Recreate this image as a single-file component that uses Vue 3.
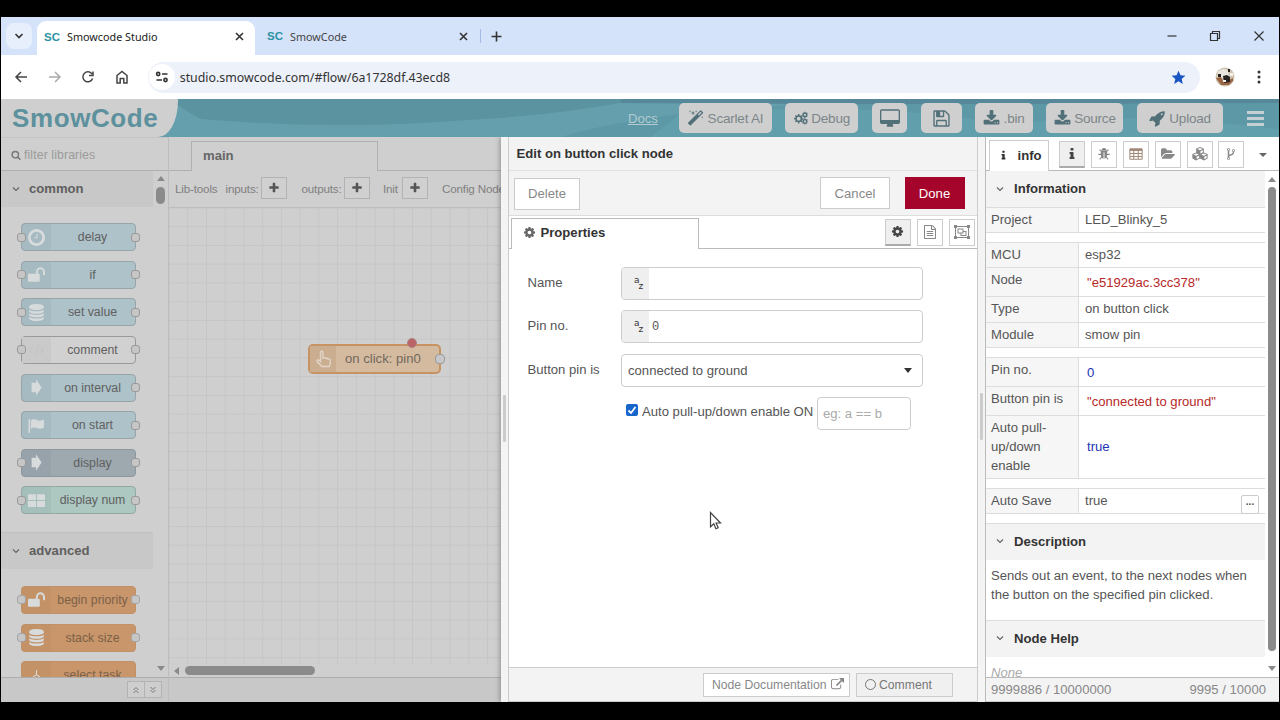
<script setup>
import { h, ref } from 'vue'

// 1792 grid glyphs, a few small ones are drawn on a 16 grid
const glyphs = {
    search: ['0 0 1792 1792', 'M1216 832q0-185-131.5-316.5t-316.5-131.5-316.5 131.5-131.5 316.5 131.5 316.5 316.5 131.5 316.5-131.5 131.5-316.5zm512 832q0 52-38 90t-90 38q-54 0-90-38l-343-342q-179 124-399 124-143 0-273.5-55.5t-225-150-150-225-55.5-273.5 55.5-273.5 150-225 225-150 273.5-55.5 273.5 55.5 225 150 150 225 55.5 273.5q0 220-124 399l343 343q37 37 37 90z'],
    plus: ['0 0 1792 1792', 'M1600 736v192q0 40-28 68t-68 28h-416v416q0 40-28 68t-68 28h-192q-40 0-68-28t-28-68v-416h-416q-40 0-68-28t-28-68v-192q0-40 28-68t68-28h416v-416q0-40 28-68t68-28h192q40 0 68 28t28 68v416h416q40 0 68 28t28 68z'],
    cog: ['0 0 1792 1792', 'M1152 896q0-106-75-181t-181-75-181 75-75 181 75 181 181 75 181-75 75-181zm512-109v222q0 12-8 23t-20 13l-185 28q-19 54-39 91 35 50 107 138 10 12 10 25t-9 23q-27 37-99 108t-94 71q-12 0-26-9l-138-108q-44 23-91 38-16 136-29 186-7 28-36 28h-222q-14 0-24.5-8.5t-11.5-21.5l-28-184q-49-16-90-37l-141 107q-10 9-25 9-14 0-25-11-126-114-165-168-7-10-7-23 0-12 8-23 15-21 51-66.5t54-70.5q-27-50-41-99l-183-27q-13-2-21-12.5t-8-23.5v-222q0-12 8-23t19-13l186-28q14-46 39-92-40-57-107-138-10-12-10-24 0-10 9-23 26-36 98.5-107.5t94.5-71.5q13 0 26 10l138 107q44-23 91-38 16-136 29-186 7-28 36-28h222q14 0 24.5 8.5t11.5 21.5l28 184q49 16 90 37l142-107q9-9 24-9 13 0 25 10 129 119 165 170 7 8 7 22 0 12-8 23-15 21-51 66.5t-54 70.5q26 50 41 98l183 28q13 2 21 12.5t8 23.5z'],
    download: ['0 0 1792 1792', 'M1344 1344q0-26-19-45t-45-19-45 19-19 45 19 45 45 19 45-19 19-45zm256 0q0-26-19-45t-45-19-45 19-19 45 19 45 45 19 45-19 19-45zm128-224v320q0 40-28 68t-68 28h-1472q-40 0-68-28t-28-68v-320q0-40 28-68t68-28h465l135 136q58 56 136 56t136-56l136-136h464q40 0 68 28t28 68zm-325-569q17 41-14 70l-448 448q-18 19-45 19t-45-19l-448-448q-31-29-14-70 17-39 59-39h256v-448q0-26 19-45t45-19h256q26 0 45 19t19 45v448h256q42 0 59 39z'],
    save: ['0 0 1792 1792', 'M512 1536h768v-384h-768v384zm896 0h128v-896q0-14-10-38.5t-20-34.5l-281-281q-10-10-34-20t-39-10v416q0 40-28 68t-68 28h-576q-40 0-68-28t-28-68v-416h-128v1280h128v-416q0-40 28-68t68-28h832q40 0 68 28t28 68v416zm-384-928v-320q0-13-9.5-22.5t-22.5-9.5h-192q-13 0-22.5 9.5t-9.5 22.5v320q0 13 9.5 22.5t22.5 9.5h192q13 0 22.5-9.5t9.5-22.5zm640 32v928q0 40-28 68t-68 28h-1344q-40 0-68-28t-28-68v-1344q0-40 28-68t68-28h928q40 0 88 20t76 48l280 280q28 28 48 76t20 88z'],
    desktop: ['-64 0 1920 1664', 'M1728 992v-832q0-13-9.5-22.5t-22.5-9.5h-1600q-13 0-22.5 9.5t-9.5 22.5v832q0 13 9.5 22.5t22.5 9.5h1600q13 0 22.5-9.5t9.5-22.5zm128-832v1088q0 66-47 113t-113 47h-544q0 37 16 77.5t32 71 16 43.5q0 26-19 45t-45 19h-512q-26 0-45-19t-19-45q0-14 16-44t32-70 16-78h-544q-66 0-113-47t-47-113v-1088q0-66 47-113t113-47h1600q66 0 113 47t47 113z'],
    external: ['0 0 1792 1792', 'M1408 928v320q0 119-84.5 203.5t-203.5 84.5h-832q-119 0-203.5-84.5t-84.5-203.5v-832q0-119 84.5-203.5t203.5-84.5h704q14 0 23 9t9 23v64q0 14-9 23t-23 9h-704q-66 0-113 47t-47 113v832q0 66 47 113t113 47h832q66 0 113-47t47-113v-320q0-14 9-23t23-9h64q14 0 23 9t9 23zm384-864v512q0 26-19 45t-45 19-45-19l-176-176-652 652q-10 10-23 10t-23-10l-114-114q-10-10-10-23t10-23l652-652-176-176q-19-19-19-45t19-45 45-19h512q26 0 45 19t19 45z'],
    folder: ['-70 0 1900 1792', 'M1815 952q0 31-31 66l-336 396q-43 51-120.5 86.5t-143.5 35.5h-1088q-34 0-60.5-13t-26.5-43q0-31 31-66l336-396q43-51 120.5-86.5t143.5-35.5h1088q34 0 60.5 13t26.5 43zm-343-344v160h-832q-94 0-197 47.5t-164 119.5l-337 396-5 6q0-4-.5-12.5t-.5-12.5v-960q0-92 66-158t158-66h320q92 0 158 66t66 158v32h544q92 0 158 66t66 158z'],
    fork: ['0 0 1792 1792', 'M672 1472q0-40-28-68t-68-28-68 28-28 68 28 68 68 28 68-28 28-68zm0-1152q0-40-28-68t-68-28-68 28-28 68 28 68 68 28 68-28 28-68zm640 128q0-40-28-68t-68-28-68 28-28 68 28 68 68 28 68-28 28-68zm96 0q0 52-26 96.5t-70 69.5q-2 287-226 414-67 38-203 81-128 40-169.5 71t-41.5 100v26q44 25 70 69.5t26 96.5q0 80-56 136t-136 56-136-56-56-136q0-52 26-96.5t70-69.5v-820q-44-25-70-69.5t-26-96.5q0-80 56-136t136-56 136 56 56 136q0 52-26 96.5t-70 69.5v497q54-26 154-57 55-17 87.5-29.5t70.5-31 59-39.5 40.5-51 28-69.5 8.5-91.5q-44-25-70-69.5t-26-96.5q0-80 56-136t136-56 136 56 56 136z'],
    rocket: ['0 0 1792 1792', 'M1440 448q0-40-28-68t-68-28-68 28-28 68 28 68 68 28 68-28 28-68zm224-288q0 249-75.5 430.5t-253.5 360.5q-81 80-195 176l-20 379q-2 16-16 26l-384 224q-7 4-16 4-12 0-23-9l-64-64q-13-14-8-32l85-276-281-281-276 85q-3 1-9 1-14 0-23-9l-64-64q-17-19-5-39l224-384q10-14 26-16l379-20q96-114 176-195 188-187 358-258t431-71q14 0 24 9.5t10 22.5z'],
    magic: ['0 0 1792 1792', 'M1254 581l293-293-107-107-293 293zm447-293q0 27-18 45l-1286 1286q-18 18-45 18t-45-18l-198-198q-18-18-18-45t18-45l1286-1286q18-18 45-18t45 18l198 198q18 18 18 45zm-1351-190l98 30-98 30-30 98-30-98-98-30 98-30 30-98zm350 162l196 60-196 60-60 196-60-196-196-60 196-60 60-196zm930 478l98 30-98 30-30 98-30-98-98-30 98-30 30-98zm-640-640l98 30-98 30-30 98-30-98-98-30 98-30 30-98z'],
    database: ['0 0 1792 1792', 'M896 768q237 0 443-43t325-127v170q0 69-103 128t-280 93.5-385 34.5-385-34.5-280-93.5-103-128v-170q119 84 325 127t443 43zm0 768q237 0 443-43t325-127v170q0 69-103 128t-280 93.5-385 34.5-385-34.5-280-93.5-103-128v-170q119 84 325 127t443 43zm0-384q237 0 443-43t325-127v170q0 69-103 128t-280 93.5-385 34.5-385-34.5-280-93.5-103-128v-170q119 84 325 127t443 43zm0-1152q208 0 385 34.5t280 93.5 103 128v128q0 69-103 128t-280 93.5-385 34.5-385-34.5-280-93.5-103-128v-128q0-69 103-128t280-93.5 385-34.5z'],
    info: ['0 0 1792 1792', 'M1216 1344v128q0 26-19 45t-45 19h-512q-26 0-45-19t-19-45v-128q0-26 19-45t45-19h64v-384h-64q-26 0-45-19t-19-45v-128q0-26 19-45t45-19h384q26 0 45 19t19 45v576h64q26 0 45 19t19 45zm-128-1152v192q0 26-19 45t-45 19h-256q-26 0-45-19t-19-45v-192q0-26 19-45t45-19h256q26 0 45 19t19 45z'],
    file: ['0 0 1792 1792', 'M1596 380q28 28 48 76t20 88v1152q0 40-28 68t-68 28h-1344q-40 0-68-28t-28-68v-1600q0-40 28-68t68-28h896q40 0 88 20t76 48zm-444-244v376h376q-10-29-22-41l-313-313q-12-12-41-22zm384 1528v-1024h-416q-40 0-68-28t-28-68v-416h-768v1536h1280zM480 768h832v128h-832zM480 1024h832v128h-832zM480 1280h832v128h-832z'],
    unlock: ['64 128 1664 1408', 'M1728 576v256q0 26-19 45t-45 19h-64q-26 0-45-19t-19-45v-256q0-106-75-181t-181-75-181 75-75 181v192h96q40 0 68 28t28 68v576q0 40-28 68t-68 28h-960q-40 0-68-28t-28-68v-576q0-40 28-68t68-28h672v-192q0-185 131.5-316.5t316.5-131.5 316.5 131.5 131.5 316.5z'],
    clock: ['0 0 16 16', 'M8 0a8 8 0 1 0 .01 0zM8 2.6a5.4 5.4 0 1 1-.01 0zM8 4.4h1v4.4H5.8v-1H8z'],
    arrow: ['0 0 16 16', 'M3.4 3.6H7.600V.2L12.800 8 7.600 15.800v-3.400H3.400z'],
    flag: ['0 0 16 16', 'M.5 2h1.4v13H.5zM2.6 3.2c3-1.6 4.6-.9 6.2-.2 2 .8 3.700.4 6.2-.7v7.500c-2.400 1.300-4.200 1.600-6.200.8-1.800-.7-3.300-1.100-6.200.5z'],
    windows: ['0 0 16 16', 'M0 2h7.500v5.600H0zM8.500 2H16v5.600H8.500zM0 8.500h7.500V14H0zM8.500 8.500H16V14H8.500z'],
    quote: ['0 0 16 16', 'M4 5l-3 4 3 3 .7-.7L2.500 9l2.200-3.300zM9.500 3.500l1 .4-3 9-1-.4zM12 5l3 3.500-3 3.500-.7-.7L13.500 8.500l-2.200-2.800z'],
    usb: ['0 0 16 16', 'M7.500 3h1v4l3 2-.5.8-3-2-3 2-.5-.8 3-2z'],
    table: ['0 0 16 16', 'M1.400 1.500h13.200q1 0 1 1v11q0 1-1 1H1.400q-1 0-1-1v-11q0-1 1-1zM1.600 4.600v2.200h3.200V4.600zM6 4.600v2.200h4V4.600zM11.200 4.600v2.200h3.200V4.600zM1.600 8v2.200h3.200V8zM6 8v2.200h4V8zM11.200 8v2.200h3.200V8zM1.600 11.300v2h3.200v-2zM6 11.300v2h4v-2zM11.200 11.300v2h3.200v-2z'],
    bug: ['0 0 16 16', 'M5 4.200a3 3 0 0 1 6 0zM3.200 2.600l2 2h5.600l2-2 .8.800-2 2v2.400h2.900v1.200h-2.900c0 1-.2 1.800-.6 2.500l2.200 2.200-.8.800-2.100-2.100c-.7.700-1.500 1-1.800 1V6H7.500v7.400c-.7 0-1.400-.4-2-1l-2 2.100-.9-.8 2.200-2.300C4.500 10.600 4.400 9.900 4.400 9H1.500V7.800h2.900V5.400l-2-2z'],
    cubes: ['0 0 18 16', 'M9 0l4.300 1.700v4.600l4.300 1.800v5L13.400 15.300 9 13.200l-4.400 2.100L.4 13.100v-5l4.300-1.800V1.700zM9 1.300L6 2.500l3 1.200 3-1.200zM9.500 7.300l2.700-1.200V3.800L9.500 5zM4.700 7.500l-3 1.200 3 1.200 3-1.200zM5.200 13.700L8 12.400V9.900l-2.800 1.200zM13.300 7.500l-3 1.200 3 1.200 3-1.200zM13.800 13.700l2.700-1.300V9.900l-2.700 1.200z'],
    group: ['0 0 16 16', 'M0 1h3v1h10V1h3v3h-1v8h1v3h-3v-1H3v1H0v-3h1V4H0zM2 4v8h1v1h10v-1h1V4h-1V3H3v1zM3.500 4.500h6V7h3v5h-6V9.500h-3zM4.500 5.500v3h4v-3zM9.500 8v1.500h-2V11h4V8z'],
    cogs: ['0 0 18 16', 'M5.200 3h1.600l.3 1.500 1.200.5 1.300-.8 1.100 1.100-.8 1.300.5 1.200 1.500.3v1.600l-1.500.3-.5 1.200.8 1.300-1.100 1.100-1.300-.8-1.200.5L6.800 15H5.200l-.3-1.700-1.200-.5-1.300.8-1.100-1.100.8-1.300-.5-1.200L.1 9.700V8.100l1.500-.3.500-1.200-.8-1.300 1.100-1.100 1.300.8 1.200-.5zM6 6.500a2.400 2.400 0 1 0 .01 0zM13.400 0h1.400l.2 1 .9.400.8-.5.900.9-.5.900.3.800v1.400l-.5.400.3.900-.9.900-.8-.5-.7.400-.2 1h-1.300l-.2-1-.8-.4-.8.500-.9-.9.500-.8-.4-.9V3.100l.5-.5-.4-.8.900-.9.800.5.700-.4zM14.100 2.500a1.400 1.400 0 1 0 .01 0zM13.400 8.400h1.400l.2 1 .9.400.8-.5.900.9-.5.900.3.800v1.400l-.5.400.3.900-.9.900-.8-.5-.7.400-.2 1h-1.300l-.2-1-.8-.4-.8.500-.9-.9.500-.8-.4-.9v-1.400l.5-.5-.4-.8.900-.9.800.5.700-.4zM14.100 10.900a1.400 1.400 0 1 0 .01 0z']
}

const Icon = (props) => {
    const [box, d] = glyphs[props.name]
    return h('svg', { viewBox: box, width: props.size, height: props.size, fill: 'currentColor', 'fill-rule': 'evenodd' }, [h('path', { d })])
}
Icon.props = ['name', 'size']

const tabs = [
    { title: 'Smowcode Studio', active: true },
    { title: 'SmowCode', active: false }
]

const actions = [
    { id: 'ai', icon: 'magic', size: 17, label: 'Scarlet AI' },
    { id: 'debug', icon: 'cogs', size: 14, label: 'Debug' },
    { id: 'desk', icon: 'desktop', size: 20, label: '' },
    { id: 'save', icon: 'save', size: 19, label: '' },
    { id: 'bin', icon: 'download', size: 17, label: '.bin' },
    { id: 'source', icon: 'download', size: 17, label: 'Source' },
    { id: 'upload', icon: 'rocket', size: 17, label: 'Upload' }
]

const common = [
    { label: 'delay', icon: 'clock', tone: 'blue', input: true },
    { label: 'if', icon: 'unlock', tone: 'blue', input: true },
    { label: 'set value', icon: 'database', tone: 'blue', input: true },
    { label: 'comment', icon: 'quote', tone: 'plain', input: true },
    { label: 'on interval', icon: 'arrow', tone: 'blue', input: false },
    { label: 'on start', icon: 'flag', tone: 'blue', input: false },
    { label: 'display', icon: 'arrow', tone: 'slate', input: true },
    { label: 'display num', icon: 'windows', tone: 'green', input: true }
]

const advanced = [
    { label: 'begin priority', icon: 'unlock', tone: 'orange', input: true },
    { label: 'stack size', icon: 'database', tone: 'orange', input: true },
    { label: 'select task', icon: 'usb', tone: 'orange', input: false }
]

const categories = [
    { name: 'common', nodes: common },
    { name: 'advanced', nodes: advanced }
]

const sideTabs = ['info', 'bug', 'table', 'folder', 'cubes', 'fork']

const groups = [
    [{ key: 'Project', value: 'LED_Blinky_5', type: '' }],
    [
        { key: 'MCU', value: 'esp32', type: '' },
        { key: 'Node', value: '"e51929ac.3cc378"', type: 'str' },
        { key: 'Type', value: 'on button click', type: '' },
        { key: 'Module', value: 'smow pin', type: '' }
    ],
    [
        { key: 'Pin no.', value: '0', type: 'num' },
        { key: 'Button pin is', value: '"connected to ground"', type: 'str' },
        { key: 'Auto pull-up/down enable', value: 'true', type: 'num tall' }
    ],
    [{ key: 'Auto Save', value: 'true', type: '', more: true }]
]

const name = ref('')
const pin = ref('0')
const pull = ref(true)
const condition = ref('')
</script>

<template>
    <div class="screen">
        <div class="tabstrip">
            <div class="tab-search">
                <svg width="10" height="10" viewBox="0 0 10 10"><path d="M1.500 3l3.500 3.500L8.500 3" /></svg>
            </div>
            <div v-for="tab in tabs" :key="tab.title" class="btab" :class="{ active: tab.active }">
                <b class="fav">SC</b>
                <span class="btitle">{{ tab.title }}</span>
                <svg class="x" width="9" height="9" viewBox="0 0 9 9"><path d="M1 1l7 7M8 1L1 8" /></svg>
            </div>
            <i class="tabsep"></i>
            <svg class="newtab" width="11" height="11" viewBox="0 0 11 11"><path d="M5.500 .5v10M.5 5.500h10" /></svg>
            <div class="win">
                <svg width="12" height="12" viewBox="0 0 12 12"><path d="M1.500 6h9" /></svg>
                <svg width="12" height="12" viewBox="0 0 12 12"><path d="M1.500 3.500h7v7h-7zM3.500 3.500v-2h7v7h-2" /></svg>
                <svg width="12" height="12" viewBox="0 0 12 12"><path d="M1.500 1.500l9 9M10.500 1.500l-9 9" /></svg>
            </div>
        </div>

        <div class="navbar">
            <svg class="nav" width="14" height="14" viewBox="0 0 14 14"><path d="M13 7H2M7 2L2 7l5 5" /></svg>
            <svg class="nav off" width="14" height="14" viewBox="0 0 14 14"><path d="M1 7h11M7 2l5 5-5 5" /></svg>
            <svg class="nav" width="14" height="14" viewBox="0 0 14 14"><path d="M11.600 8.500A5 5 0 1 1 11 4M12 1.500v4H8" /></svg>
            <svg class="nav" width="14" height="14" viewBox="0 0 14 14"><path d="M2 5.500L7 1.500l5 4V13H8.800V8.500H5.200V13H2z" /></svg>
            <div class="url">
                <div class="tune">
                    <svg width="14" height="12" viewBox="0 0 14 12"><circle cx="3.200" cy="3" r="1.600" /><path d="M7 3h5.500M1.500 9H7" /><circle cx="10.500" cy="9" r="1.600" /></svg>
                </div>
                <span>studio.smowcode.com/#flow/6a1728df.43ecd8</span>
                <svg class="star" width="15" height="15" viewBox="0 0 16 16"><path d="M8 .8l2.100 4.900 5.300.5-4 3.500 1.200 5.200L8 12.100l-4.600 2.800 1.200-5.200-4-3.500 5.300-.5z" /></svg>
            </div>
            <svg class="avatar" width="20" height="20" viewBox="0 0 20 20">
                <circle cx="10" cy="10" r="9.500" fill="#cfc2ad" />
                <path d="M3 4.500Q9 0 13 4l1 5-5 2-7-1z" fill="#e9e6e0" />
                <path d="M1 11l5-1 2 4 6-1 4-2v3l-4 4H6z" fill="#9a6545" />
                <path d="M8 9l4-1 3 2v5l-6 1zM3 7h3v3H3zM13 2h2v3h-2z" fill="#262222" />
                <path d="M8 13h3v2H8zM15 6h3v3h-3z" fill="#f5f2ee" />
            </svg>
            <svg class="dots" width="4" height="14" viewBox="0 0 4 14"><circle cx="2" cy="2" r="1.500" /><circle cx="2" cy="7" r="1.500" /><circle cx="2" cy="12" r="1.500" /></svg>
        </div>

        <header class="header">
            <svg class="waves" viewBox="0 0 1278 38" preserveAspectRatio="none">
                <path d="M0 0H640Q560 16 480 20Q340 32 200 20Q180 10 170 0z" fill="#5b93a0" />
                <path d="M560 38Q640 14 790 6L1278 0V38z" fill="#5c98a6" />
                <path d="M680 14Q900 2 1000 26Q1120 10 1278 30V38H650z" fill="#629fad" />
                <path d="M620 0H1278V4Q900 6 620 4z" fill="#57889a" />
            </svg>
            <div class="brand">SmowCode</div>
            <a class="docs">Docs</a>
            <div class="actions">
                <button v-for="a in actions" :key="a.id" :class="a.id">
                    <Icon :name="a.icon" :size="a.size" />
                    <span v-if="a.label">{{ a.label }}</span>
                </button>
            </div>
            <div class="burger"><i></i><i></i><i></i></div>
        </header>

        <main class="main">
            <aside class="palette">
                <div class="filter"><Icon name="search" size="10" /><span>filter libraries</span></div>
                <div class="pal-body">
                    <div class="pal-list">
                        <section v-for="cat in categories" :key="cat.name">
                            <h3 class="cat">
                                <svg class="chev" width="8" height="8" viewBox="0 0 8 8"><path d="M1 2.500l3 3 3-3" /></svg>{{ cat.name }}
                            </h3>
                            <div class="nodes">
                                <div v-for="n in cat.nodes" :key="n.label" class="node" :class="n.tone">
                                    <i v-if="n.input" class="port in"></i>
                                    <span class="nicon"><Icon :name="n.icon" size="17" /></span>
                                    <span class="nlabel">{{ n.label }}</span>
                                    <i v-if="n.label !== 'select task'" class="port out"></i>
                                </div>
                            </div>
                        </section>
                    </div>
                    <div class="vbar">
                        <i class="up"></i>
                        <i class="thumb"></i>
                        <i class="down"></i>
                    </div>
                </div>
                <div class="pal-foot">
                    <span><svg width="8" height="8" viewBox="0 0 8 8"><path d="M1.500 4L4 1.500 6.500 4M1.500 7L4 4.500 6.500 7" /></svg></span>
                    <span><svg width="8" height="8" viewBox="0 0 8 8"><path d="M1.500 1L4 3.500 6.500 1M1.500 4L4 6.500 6.500 4" /></svg></span>
                </div>
            </aside>

            <section class="work">
                <div class="wtabs"><div class="wtab">main</div></div>
                <div class="tools">
                    <span class="t1">Lib-tools</span>
                    <span class="t2">inputs:</span>
                    <button><Icon name="plus" size="12" /></button>
                    <span class="t3">outputs:</span>
                    <button><Icon name="plus" size="12" /></button>
                    <span class="t4">Init</span>
                    <button><Icon name="plus" size="12" /></button>
                    <span class="t5">Config Nodes</span>
                </div>
                <div class="chart">
                    <div class="flow-node">
                        <span class="ficon">
                            <svg width="17" height="18" viewBox="0 0 17 18"><path d="M5.500 11V2.500q0-1.300 1.200-1.300t1.200 1.300V8q2-.9 2.600.4 2-.6 2.600.7 2.200-.4 2.200 1.400v2.300q0 2-1.200 3.700H7L2.200 11.800q-.6-1.500.8-1.800 1-.2 2.500 1.500z" /></svg>
                        </span>
                        <span class="flabel">on click: pin0</span>
                        <i class="changed"></i>
                        <i class="fport"></i>
                    </div>
                </div>
                <div class="hbar"><i class="left"></i><i class="thumb"></i></div>
                <div class="wfoot"></div>
            </section>

            <section class="tray">
                <div class="grip"><i></i></div>
                <div class="tray-main">
                    <div class="tray-title">Edit on button click node</div>
                    <div class="tray-bar">
                        <button class="del">Delete</button>
                        <button class="cancel">Cancel</button>
                        <button class="done">Done</button>
                    </div>
                    <div class="ptabs">
                        <div class="ptab"><Icon name="cog" size="13" />Properties</div>
                        <div class="pbtns">
                            <span class="sq on"><Icon name="cog" size="13" /></span>
                            <span class="sq"><Icon name="file" size="14" /></span>
                            <span class="sq"><Icon name="group" size="16" /></span>
                        </div>
                    </div>
                    <form class="form" @submit.prevent>
                        <div class="row">
                            <label>Name</label>
                            <div class="typed">
                                <span class="az"><i>a</i><i>z</i></span>
                                <input type="text" v-model="name">
                            </div>
                        </div>
                        <div class="row">
                            <label>Pin no.</label>
                            <div class="typed">
                                <span class="az"><i>a</i><i>z</i></span>
                                <input type="text" v-model="pin">
                            </div>
                        </div>
                        <div class="row">
                            <label>Button pin is</label>
                            <div class="select">connected to ground<i></i></div>
                        </div>
                        <div class="row check">
                            <span class="box" :class="{ checked: pull }" @click="pull = !pull">
                                <svg v-if="pull" width="12" height="12" viewBox="0 0 12 12"><path d="M2.500 6.500L5 9l4.500-6" /></svg>
                            </span>
                            <span class="clabel">Auto pull-up/down enable ON</span>
                            <input class="cond" type="text" v-model="condition" placeholder="eg: a == b">
                        </div>
                    </form>
                    <div class="tray-foot">
                        <button class="docbtn">Node Documentation <Icon name="external" size="13" /></button>
                        <button class="combtn"><i></i>Comment</button>
                    </div>
                </div>
            </section>

            <div class="split"><i></i></div>

            <aside class="side">
                <div class="stabs">
                    <div class="stab"><Icon name="info" size="11" /><span>info</span></div>
                    <div class="sbtns">
                        <span v-for="(s, index) in sideTabs" :key="s" class="sq" :class="[s, { on: index === 0 }]"><Icon :name="s" :size="s === 'cubes' ? 16 : 14" /></span>
                    </div>
                    <i class="caret"></i>
                </div>
                <div class="side-body">
                    <div class="side-list">
                        <h3 class="sec"><svg class="chev" width="8" height="8" viewBox="0 0 8 8"><path d="M1 2.500l3 3 3-3" /></svg>Information</h3>
                        <div v-for="(rows, index) in groups" :key="index" class="props">
                            <div v-for="r in rows" :key="r.key" class="prop" :class="r.type">
                                <div class="k">{{ r.key }}</div>
                                <div class="v">{{ r.value }}</div>
                                <span v-if="r.more" class="more">...</span>
                            </div>
                        </div>
                        <h3 class="sec bordered"><svg class="chev" width="8" height="8" viewBox="0 0 8 8"><path d="M1 2.500l3 3 3-3" /></svg>Description</h3>
                        <p class="desc">Sends out an event, to the next nodes when<br>the button on the specified pin clicked.</p>
                        <h3 class="sec bordered"><svg class="chev" width="8" height="8" viewBox="0 0 8 8"><path d="M1 2.500l3 3 3-3" /></svg>Node Help</h3>
                        <p class="none">None</p>
                    </div>
                    <div class="vbar">
                        <i class="up"></i>
                        <i class="thumb"></i>
                        <i class="down"></i>
                    </div>
                </div>
                <div class="side-foot"><span>9999886 / 10000000</span><span>9995 / 10000</span></div>
            </aside>
        </main>

        <svg class="pointer" width="14" height="20" viewBox="0 0 14 20"><path d="M1.500 1.500v14.300l3.300-3 2.100 5 2.300-1-2.100-4.800h4.400z" /></svg>
    </div>
</template>

<style>
body {
    margin: 0;
    background: #000;
}
</style>

<style scoped>
* {
    box-sizing: border-box;
}
.screen {
    position: relative;
    width: 1280px;
    height: 720px;
    padding: 17px 1px 18px;
    background: #000;
    overflow: hidden;
    display: flex;
    flex-direction: column;
    font-family: "Liberation Sans", Arial, sans-serif;
    font-size: 13.12px;
    color: #555;
}
button, input {
    font-family: inherit;
    font-size: inherit;
    color: inherit;
    padding: 0;
    margin: 0;
    outline: none;
}
svg {
    flex: none;
    display: block;
}
h3, p {
    margin: 0;
}

/* browser chrome */
.tabstrip {
    height: 38px;
    flex: none;
    display: flex;
    align-items: center;
    background: #d4e2fa;
    padding-left: 5px;
}
.tabstrip svg, .nav, .tune svg {
    fill: none;
    stroke: #333;
    stroke-width: 1.6;
}
.tab-search {
    width: 26px;
    height: 26px;
    border-radius: 8px;
    background: #e8effc;
    display: flex;
    align-items: center;
    justify-content: center;
}
.btab {
    display: flex;
    align-items: center;
    height: 38px;
    width: 218px;
    padding-left: 7px;
    font-family: "Noto Sans", "Open Sans", sans-serif;
    font-size: 10.800px;
    color: #444;
}
.btab.active {
    height: 34px;
    align-self: flex-end;
    margin-left: 5px;
    margin-right: 5px;
    padding-bottom: 3px;
    background: #fff;
    border-radius: 9px 9px 0 0;
    color: #222;
}
.fav {
    width: 23px;
    font-family: "Liberation Sans", sans-serif;
    font-size: 11.500px;
    color: #2d92a3;
}
.btitle {
    flex: 1;
}
.btab .x {
    margin-right: 11px;
}
.btab:not(.active) .x {
    margin-right: 10px;
}
.tabsep {
    width: 1px;
    height: 14px;
    background: #a6bbe4;
    margin-left: 2px;
    margin-right: 10px;
}
.win {
    margin-left: auto;
    margin-right: 14.500px;
    display: flex;
    gap: 31.500px;
}
.tabstrip .win svg {
    stroke-width: 1.2;
}
.navbar {
    height: 44px;
    flex: none;
    display: flex;
    align-items: center;
    background: #fff;
    padding-left: 13px;
}
.nav {
    margin-right: 19.700px;
    stroke: #444;
    stroke-width: 1.500;
}
.nav.off {
    stroke: #aaa;
}
.url {
    width: 1052px;
    height: 31px;
    border-radius: 16px;
    background: #edf1f9;
    display: flex;
    align-items: center;
    padding-left: 2px;
    margin-left: -1px;
    font-family: "Noto Sans", "Open Sans", sans-serif;
    font-size: 12.350px;
    color: #333;
}
.tune {
    width: 26px;
    height: 26px;
    border-radius: 50%;
    background: #fff;
    display: flex;
    align-items: center;
    justify-content: center;
    margin-right: 5px;
    margin-left: -1px;
}
.star {
    margin-left: auto;
    margin-right: 14px;
    fill: #1a55c4;
}
.avatar {
    margin-left: 15px;
}
.dots {
    margin-left: 22px;
    fill: #333;
}

/* app header */
.header {
    position: relative;
    height: 38px;
    flex: none;
    display: flex;
    align-items: center;
    background: #659fad;
}
.waves {
    position: absolute;
    left: 0;
    top: 0;
    width: 100%;
    height: 100%;
}
.brand {
    position: relative;
    width: 177px;
    height: 38px;
    line-height: 39px;
    padding-left: 11px;
    background: #cfcfcf;
    border-bottom-right-radius: 20px 36px;
    color: #5d919d;
    font-size: 26px;
    font-weight: bold;
    letter-spacing: 0.6px;
}
.docs {
    position: relative;
    margin-left: 450px;
    width: 50.500px;
    color: #b3cbd1;
    text-decoration: underline;
}
.actions {
    position: relative;
    display: flex;
    gap: 13.400px;
}
.actions button {
    height: 30px;
    border: none;
    border-radius: 5px;
    background: #cfcfcf;
    color: #527078;
    display: flex;
    align-items: center;
    justify-content: center;
    gap: 3.500px;
    font-size: 13.500px;
    letter-spacing: -0.2px;
}
.actions span {
    color: #7b8689;
}
.actions .ai { width: 93.500px; }
.actions .debug { width: 73px; }
.actions .desk { width: 35.500px; }
.actions .save { width: 41px; }
.actions .bin { width: 57.500px; }
.actions .source { width: 77.500px; }
.actions .upload { width: 86px; }
.burger {
    position: relative;
    margin-left: 24px;
    display: flex;
    flex-direction: column;
    gap: 3px;
}
.burger i {
    width: 17px;
    height: 3px;
    background: #c4d0d3;
}

/* columns */
.main {
    height: 565px;
    flex: none;
    display: flex;
    background: #cfcfcf;
}
.vbar {
    display: flex;
    flex-direction: column;
    align-items: center;
}
.up, .down {
    border-left: 4.500px solid transparent;
    border-right: 4.500px solid transparent;
}
.up {
    border-bottom: 5px solid #8a8a8a;
}
.down {
    border-top: 5px solid #8a8a8a;
    margin-top: auto;
}
.thumb {
    background: #8b8b8b;
    border-radius: 5px;
}
.chev {
    fill: none;
    stroke: #666;
    stroke-width: 1.200;
}

/* palette */
.palette {
    width: 168px;
    flex: none;
    display: flex;
    flex-direction: column;
    border-right: 1px solid #bdbdbd;
    background: #cfcfcf;
}
.filter {
    height: 34px;
    flex: none;
    display: flex;
    align-items: center;
    gap: 3px;
    padding-left: 10px;
    padding-bottom: 2px;
    padding-top: 4px;
    border-top: 1px solid #c4c4c4;
    border-bottom: 1px solid #b0b0b0;
    color: #9b9b9b;
    font-size: 12.300px;
    letter-spacing: 0.1px;
}
.filter svg {
    color: #777;
}
.pal-body {
    flex: 1;
    min-height: 0;
    display: flex;
    overflow: hidden;
}
.pal-list {
    width: 152px;
    height: 506px;
    overflow: hidden;
}
.cat {
    height: 36px;
    display: flex;
    align-items: center;
    gap: 9px;
    padding-left: 11px;
    padding-bottom: 1px;
    background: #c8c8c8;
    color: #5f5f5f;
    font-size: 13.120px;
}
section + section .cat {
    height: 37px;
    padding-bottom: 0;
    border-top: 1px solid #c0c0c0;
}
.nodes {
    display: flex;
    flex-direction: column;
    gap: 9.650px;
    padding: 16px 0 17.500px 19.500px;
}
section + section .nodes {
    padding-top: 17px;
}
.node {
    position: relative;
    width: 115px;
    height: 28px;
    flex: none;
    display: flex;
    align-items: center;
    border: 1px solid #97a4a8;
    border-radius: 4px;
    background: #adc2c9;
    color: #606060;
    font-size: 12.300px;
}
.nicon {
    width: 29px;
    height: 26px;
    display: flex;
    align-items: center;
    justify-content: center;
    background: rgba(110, 120, 125, 0.1);
    color: #d8dbdc;
}
.nlabel {
    flex: 1;
    text-align: center;
    white-space: nowrap;
}
.port {
    position: absolute;
    top: 8.500px;
    width: 9px;
    height: 9px;
    border: 1px solid #999;
    border-radius: 3px;
    background: #c6c6c6;
}
.port.in { left: -5px; }
.port.out { right: -5px; }
.plain {
    background: #d1d1d1;
    border-color: #999;
}
.plain .nicon {
    background: #cacaca;
    color: #c3c3c3;
}
.slate {
    background: #9da8af;
    border-color: #8d979d;
}
.green {
    background: #acc8c1;
    border-color: #93a8a2;
}
.orange {
    background: #c8966a;
    border-color: #c09066;
    color: #7c6149;
}
.orange .nicon {
    background: rgba(120, 90, 60, 0.06);
}
.orange .port {
    border-color: #a5a5a5;
}
.palette .vbar {
    flex: 1;
    padding: 5px 0 6px;
}
.palette .thumb {
    width: 9px;
    height: 17px;
    margin-top: 6px;
}
.pal-foot {
    height: 25px;
    flex: none;
    display: flex;
    justify-content: flex-end;
    align-items: center;
    padding-right: 6px;
    padding-bottom: 1px;
    border-top: 1px solid #adadad;
    background: #c8c8c8;
}
.pal-foot span {
    width: 18px;
    height: 17px;
    display: flex;
    align-items: center;
    justify-content: center;
    border: 1px solid #b3b3b3;
    margin-left: -1px;
    background: #cecece;
}
.pal-foot svg {
    fill: none;
    stroke: #777;
}

/* workspace */
.work {
    width: 332px;
    flex: none;
    display: flex;
    flex-direction: column;
    overflow: hidden;
}
.wtabs {
    height: 34px;
    flex: none;
    padding-left: 22px;
    padding-top: 3.500px;
    border-bottom: 1px solid #b0b0b0;
}
.wtab {
    width: 187px;
    height: 30.500px;
    line-height: 27px;
    padding-left: 11px;
    border: 1px solid #b0b0b0;
    border-bottom: none;
    background: #cfcfcf;
    font-weight: bold;
    color: #666;
}
.tools {
    height: 37px;
    flex: none;
    display: flex;
    align-items: center;
    border-bottom: 1px solid #bdbdbd;
    padding-bottom: 2px;
    font-size: 11.600px;
    color: #808080;
    white-space: nowrap;
    letter-spacing: -0.15px;
}
.tools button {
    width: 26px;
    height: 22px;
    flex: none;
    border: 1px solid #b3b3b3;
    background: #d0d0d0;
    color: #555;
    display: flex;
    align-items: center;
    justify-content: center;
}
.t1, .t2, .t3, .t4, .t5 { flex: none; }
.t1 { margin-left: 6px; width: 50.500px; }
.t2 { width: 35.500px; }
.t3 { width: 42.500px; margin-left: 14.500px; }
.t4 { width: 19px; margin-left: 13px; }
.t5 { margin-left: 14px; }
.chart {
    position: relative;
    flex: 1;
    background-image: linear-gradient(to right, #c5c6c6 1px, transparent 1px), linear-gradient(to bottom, #c5c6c6 1px, transparent 1px);
    background-size: 18.740px 18.740px;
    background-position: -0.500px -0.500px;
}
.flow-node {
    position: absolute;
    left: 139px;
    top: 136px;
    width: 133px;
    height: 30px;
    display: flex;
    align-items: center;
    border: 2px solid #c79363;
    border-radius: 5px;
    background: #d4bb9f;
    color: #71675e;
}
.ficon {
    width: 26px;
    height: 26px;
    display: flex;
    align-items: center;
    justify-content: center;
    background: #cbae90;
}
.ficon svg {
    fill: none;
    stroke: #e2d5c8;
    stroke-width: 1.400;
}
.flabel {
    padding-left: 9px;
    padding-bottom: 2px;
}
.changed {
    position: absolute;
    left: 97px;
    top: -8px;
    width: 10px;
    height: 10px;
    border-radius: 50%;
    background: #bb6468;
    border: 1px solid #b08080;
}
.fport {
    position: absolute;
    right: -6px;
    top: 8px;
    width: 10px;
    height: 10px;
    border: 1px solid #999;
    border-radius: 4px;
    background: #c6c8c9;
}
.hbar {
    height: 13px;
    flex: none;
    display: flex;
    align-items: center;
    padding-left: 5px;
}
.left {
    border-top: 4.500px solid transparent;
    border-bottom: 4.500px solid transparent;
    border-right: 5px solid #8a8a8a;
}
.hbar .thumb {
    width: 130px;
    height: 8.500px;
    margin-left: 6px;
}
.wfoot {
    height: 25px;
    flex: none;
    border-top: 1px solid #adadad;
    background: #c8c8c8;
}

/* edit tray */
.tray {
    width: 477px;
    flex: none;
    display: flex;
    background: #fff;
    box-shadow: -1px 0 5px rgba(0, 0, 0, 0.3);
    z-index: 1;
    clip-path: inset(0 0 0 -8px);
}
.grip {
    width: 7px;
    background: #f4f4f4;
    display: flex;
    padding: 258px 0 0 2px;
}
.grip i, .split i {
    width: 3px;
    height: 47px;
    background: #ccc;
    border-radius: 1px;
}
.tray-main {
    width: 470px;
    display: flex;
    flex-direction: column;
    border-left: 1px solid #ccc;
    border-right: 1px solid #ccc;
}
.tray-title {
    height: 34px;
    flex: none;
    line-height: 34px;
    padding-left: 7.500px;
    background: #f3f3f3;
    border-bottom: 1px solid #e0e0e0;
    font-weight: bold;
    color: #333;
}
.tray-bar {
    height: 45px;
    flex: none;
    display: flex;
    align-items: center;
    background: #f3f3f3;
    border-bottom: 1px solid #ddd;
    padding-left: 5px;
}
.tray-bar button {
    height: 32px;
    border: 1px solid #ccc;
    background: #fff;
    color: #888;
}
.tray-bar .del {
    width: 66px;
    margin-right: auto;
    margin-top: 1px;
}
.tray-bar .cancel {
    width: 70px;
    margin-right: 14.500px;
}
.tray-bar .done {
    width: 60px;
    margin-right: 12.500px;
    background: #a5052a;
    border-color: #a5052a;
    color: #fff;
}
.ptabs {
    height: 33px;
    flex: none;
    display: flex;
    justify-content: space-between;
    border-bottom: 1px solid #bbb;
    padding: 2px 2.500px 0 2px;
}
.ptab {
    width: 188px;
    height: 31px;
    display: flex;
    align-items: center;
    gap: 4.500px;
    padding-left: 11px;
    padding-bottom: 3px;
    border: 1px solid #bbb;
    border-bottom: none;
    background: #fff;
    font-weight: bold;
    color: #333;
}
.ptab svg {
    color: #666;
}
.pbtns, .sbtns {
    display: flex;
    gap: 6px;
    padding-top: 1px;
}
.sq {
    width: 26px;
    height: 26.500px;
    display: flex;
    align-items: center;
    justify-content: center;
    border: 1px solid #ccc;
    background: #fff;
    color: #888;
}
.sq.on {
    background: #efefef;
    border-bottom: 2px solid #aaa;
    color: #444;
}
.form {
    flex: 1;
    padding: 17.800px 0 0 18.500px;
}
.row {
    height: 33px;
    margin-bottom: 10.400px;
    display: flex;
}
.row label {
    width: 93.500px;
    line-height: 31px;
}
.typed, .select {
    width: 302px;
    height: 33px;
    display: flex;
    align-items: center;
    border: 1px solid #ccc;
    border-radius: 4px;
    overflow: hidden;
}
.az {
    width: 27px;
    height: 31px;
    background: #efefef;
    display: flex;
    justify-content: center;
    padding: 7px 0 0 6px;
    font-family: "DejaVu Sans", sans-serif;
    font-size: 9px;
    line-height: 10px;
    color: #333;
}
.az i {
    font-style: normal;
}
.az i + i {
    padding-top: 6px;
    margin-left: -1px;
}
.typed input {
    flex: 1;
    height: 31px;
    border: none;
    padding-left: 3px;
    padding-top: 1px;
    font-family: "Liberation Mono", monospace;
    font-size: 12px;
    background: transparent;
}
.select {
    justify-content: space-between;
    padding: 0 10px 0 6px;
}
.select i {
    border-left: 4px solid transparent;
    border-right: 4px solid transparent;
    border-top: 5px solid #333;
}
.check {
    align-items: center;
    padding-left: 98px;
}
.box {
    width: 12px;
    height: 12px;
    border-radius: 2px;
    border: 1px solid #888;
    margin-top: -6px;
}
.box svg {
    fill: none;
    stroke: #fff;
    stroke-width: 1.800;
}
.box.checked {
    border: none;
    background: #1866cc;
}
.clabel {
    margin-left: 4.500px;
    margin-top: -3px;
    width: 175px;
    white-space: nowrap;
}
.cond {
    width: 94px;
    height: 33px;
    border: 1px solid #ccc;
    border-radius: 4px;
    padding-left: 5px;
}
.cond::placeholder {
    color: #aaa;
    opacity: 1;
}
.tray-foot {
    height: 35px;
    flex: none;
    display: flex;
    align-items: center;
    justify-content: flex-end;
    gap: 6px;
    padding-right: 24px;
    background: #f3f3f3;
    border-top: 1px solid #ccc;
    border-bottom: 1px solid #ccc;
}
.tray-foot button {
    height: 24px;
    border: 1px solid #ccc;
    display: flex;
    align-items: center;
    gap: 4px;
    font-size: 12.200px;
}
.docbtn {
    width: 147px;
    padding-left: 8px;
    background: #fff;
    color: #888;
    white-space: nowrap;
}
.combtn {
    width: 97px;
    padding-left: 8px;
    background: #f0f0f0;
    color: #777;
}
.combtn i {
    width: 11px;
    height: 11px;
    margin-right: -1px;
    border: 1.500px solid #777;
    border-radius: 50%;
}
.split {
    width: 7px;
    flex: none;
    background: #f4f4f4;
    padding: 256px 0 0 2px;
    display: flex;
}

/* sidebar */
.side {
    flex: 1;
    display: flex;
    flex-direction: column;
    background: #fff;
    border-left: 1px solid #bbb;
}
.stabs {
    height: 34px;
    flex: none;
    display: flex;
    border-bottom: 1px solid #bbb;
    padding: 3px 0 0 3px;
}
.stab {
    width: 60px;
    height: 31px;
    display: flex;
    align-items: center;
    padding-left: 7.500px;
    padding-bottom: 2px;
    gap: 9px;
    border: 1px solid #ccc;
    border-bottom: none;
    background: #fff;
    font-weight: bold;
    color: #333;
}
.sbtns {
    margin-left: 10px;
    gap: 5.900px;
}
.sq.table {
    color: #a38b7c;
}
.caret {
    border-left: 4px solid transparent;
    border-right: 4px solid transparent;
    border-top: 4.500px solid #666;
    height: 0;
    margin: 13px 0 0 14.500px;
}
.side-body {
    flex: 1;
    min-height: 0;
    display: flex;
}
.side-list {
    width: 279px;
    height: 506px;
    overflow: hidden;
}
.sec {
    height: 36px;
    display: flex;
    align-items: center;
    gap: 10px;
    padding-left: 10px;
    padding-bottom: 1px;
    background: #f3f3f3;
    color: #333;
    font-size: 13.120px;
}
.bordered {
    height: 37px;
    border-top: 1px solid #ddd;
}
.props {
    border-top: 1px solid #ddd;
    margin-bottom: 8.500px;
}
.props:nth-of-type(1) {
    margin-top: -0.500px;
}
.prop {
    position: relative;
    display: flex;
    height: 25.500px;
    line-height: 18.740px;
    border-bottom: 1px solid #ddd;
}
.prop.str, .prop.num {
    height: 29.300px;
}
.prop.tall {
    height: 63px;
}
.k {
    width: 93px;
    padding: 3px 10px 0 5px;
    background: #f6f6f6;
    border-right: 1px solid #ddd;
}
.v {
    padding: 3px 0 0 6px;
}
.str .v, .num .v {
    padding: 6px 0 0 8px;
    color: #b72828;
}
.num .v {
    color: #2033b5;
}
.tall .v {
    padding-top: 22px;
}
.more {
    position: absolute;
    right: 6px;
    top: 6px;
    width: 18px;
    height: 19px;
    border: 1px solid #ccc;
    border-radius: 2px;
    background: #fff;
    font-size: 10px;
    font-weight: bold;
    line-height: 11px;
    text-align: center;
}
.desc {
    height: 60px;
    padding: 6px 0 0 5px;
    line-height: 19.500px;
    white-space: nowrap;
}
.none {
    padding: 6px 0 0 5px;
    line-height: 19px;
    font-style: italic;
    color: #aaa;
}
.side .vbar {
    flex: 1;
    padding: 6px 0;
}
.side .thumb {
    width: 8.500px;
    height: 464px;
    margin-top: 5px;
}
.side-foot {
    height: 25px;
    flex: none;
    display: flex;
    justify-content: space-between;
    line-height: 23px;
    padding: 0 13px 0 5px;
    border-top: 1px solid #bbb;
    border-bottom: 1px solid #ccc;
    background: #f3f3f3;
    color: #888;
}
.pointer {
    position: absolute;
    left: 709px;
    top: 511px;
    z-index: 3;
    fill: #fff;
    stroke: #444;
    stroke-width: 1.200;
}
</style>
